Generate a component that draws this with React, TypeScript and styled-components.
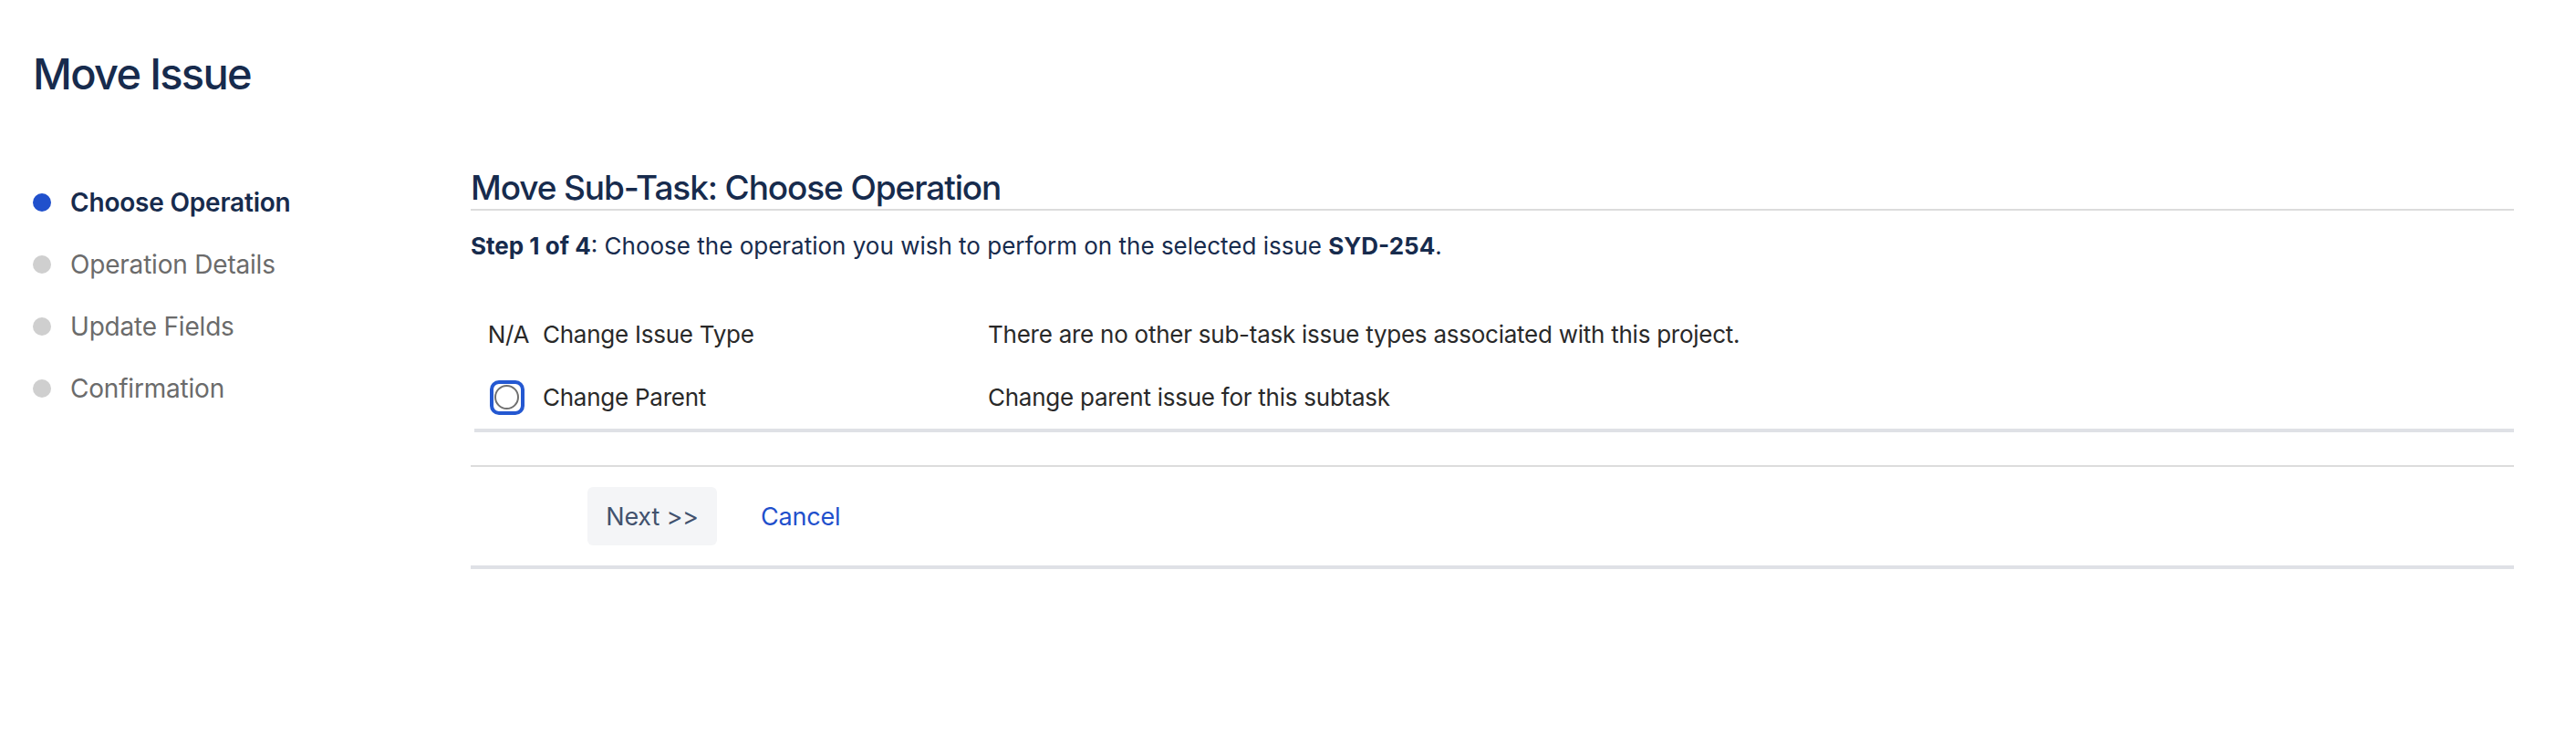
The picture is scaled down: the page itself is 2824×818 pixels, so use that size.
import React from "react";
import styled, { createGlobalStyle } from "styled-components";

const GlobalStyle = createGlobalStyle`
  html, body {
    margin: 0;
    padding: 0;
    background: #ffffff;
  }
  body {
    font-family: Inter, "Noto Sans", "Liberation Sans", sans-serif;
    color: #172b4d;
  }
`;

const steps = [
  { name: "Choose Operation", active: true },
  { name: "Operation Details", active: false },
  { name: "Update Fields", active: false },
  { name: "Confirmation", active: false },
];

const operations = [
  {
    id: "type",
    label: "Change Issue Type",
    note: "There are no other sub-task issue types associated with this project.",
    available: false,
  },
  {
    id: "parent",
    label: "Change Parent",
    note: "Change parent issue for this subtask",
    available: true,
  },
];

const Page = styled.div`
  padding: 57px 68px 0 36px;
`;

const Title = styled.h1`
  margin: 0;
  font-size: 47px;
  line-height: 48px;
  font-weight: 500;
  letter-spacing: -1.7px;
  color: #172b4d;
`;

const Body = styled.div`
  display: flex;
  align-items: flex-start;
  margin-top: 78px;
`;

const Steps = styled.ul`
  list-style: none;
  margin: 0;
  padding: 0;
  width: 480px;
  flex-shrink: 0;
  margin-top: 5px;
`;

const Step = styled.li<{ $active: boolean }>`
  display: flex;
  align-items: center;
  gap: 21px;
  height: 68px;
  font-size: 28px;
  font-weight: ${(p) => (p.$active ? 600 : 400)};
  color: ${(p) => (p.$active ? "#172b4d" : "#6b6b6b")};
  letter-spacing: -0.2px;
`;

const Dot = styled.span<{ $active: boolean }>`
  width: 20px;
  height: 20px;
  border-radius: 50%;
  background: ${(p) => (p.$active ? "#2050cc" : "#cfcfcf")};
`;

const Content = styled.div`
  flex: 1;
  min-width: 0;
`;

const Heading = styled.h2`
  margin: 0;
  font-size: 37px;
  line-height: 46px;
  font-weight: 500;
  letter-spacing: -1.1px;
  color: #172b4d;
  border-bottom: 2px solid #dcdcdc;
`;

const Intro = styled.p`
  margin: 21px 0 0;
  font-size: 26px;
  line-height: 36px;
  color: #172b4d;
  b {
    font-weight: 700;
  }
`;

const Table = styled.div`
  margin: 44px 0 0 4px;
  border-bottom: 4px solid #dfe1e6;
`;

const Row = styled.div`
  display: grid;
  grid-template-columns: 75px 488px 1fr;
  align-items: center;
  height: 69px;
  font-size: 26px;
  letter-spacing: -0.25px;
  color: #292929;
`;

const Marker = styled.div`
  display: flex;
  justify-content: center;
`;

const Radio = styled.span`
  box-sizing: border-box;
  width: 38px;
  height: 38px;
  margin-right: 4px;
  border: 4px solid #2458d1;
  border-radius: 10px;
  display: flex;
  align-items: center;
  justify-content: center;
  &::after {
    content: "";
    box-sizing: border-box;
    width: 27px;
    height: 27px;
    border-radius: 50%;
    border: 2px solid #707070;
    background: #fff;
  }
`;

const Actions = styled.div`
  margin-top: 36px;
  border-top: 2px solid #dcdcdc;
  border-bottom: 4px solid #dfe1e6;
  padding: 22px 0 22px 128px;
  display: flex;
  align-items: center;
  gap: 48px;
`;

const Button = styled.button`
  height: 64px;
  width: 142px;
  padding: 0;
  border: none;
  border-radius: 6px;
  background: #f4f5f7;
  color: #42526e;
  font-family: inherit;
  font-size: 27px;
  letter-spacing: -0.2px;
`;

const LinkButton = styled.a`
  font-size: 27px;
  letter-spacing: -0.2px;
  color: #1f50cc;
  text-decoration: none;
`;

export default function App() {
  return (
    <>
      <GlobalStyle />
      <Page>
        <Title>Move Issue</Title>
        <Body>
          <Steps>
            {steps.map((s) => (
              <Step key={s.name} $active={s.active}>
                <Dot $active={s.active} />
                {s.name}
              </Step>
            ))}
          </Steps>
          <Content>
            <Heading>Move Sub-Task: Choose Operation</Heading>
            <Intro>
              <b>Step 1 of 4</b>: Choose the operation you wish to perform on the
              selected issue <b>SYD-254</b>.
            </Intro>
            <Table>
              {operations.map((op) => (
                <Row key={op.id}>
                  <Marker>{op.available ? <Radio /> : "N/A"}</Marker>
                  <span>{op.label}</span>
                  <span>{op.note}</span>
                </Row>
              ))}
            </Table>
            <Actions>
              <Button>Next &gt;&gt;</Button>
              <LinkButton href="#">Cancel</LinkButton>
            </Actions>
          </Content>
        </Body>
      </Page>
    </>
  );
}
